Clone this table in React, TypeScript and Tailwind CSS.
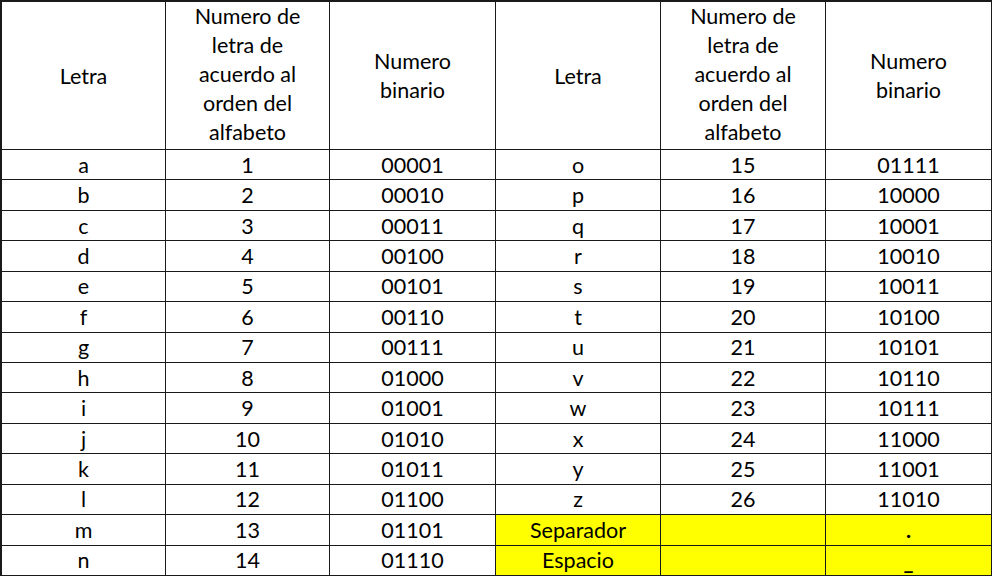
import React from "react";

const left: [string, string, string][] = [
  ["a", "1", "00001"],
  ["b", "2", "00010"],
  ["c", "3", "00011"],
  ["d", "4", "00100"],
  ["e", "5", "00101"],
  ["f", "6", "00110"],
  ["g", "7", "00111"],
  ["h", "8", "01000"],
  ["i", "9", "01001"],
  ["j", "10", "01010"],
  ["k", "11", "01011"],
  ["l", "12", "01100"],
  ["m", "13", "01101"],
  ["n", "14", "01110"],
];

const right: [string, string, string][] = [
  ["o", "15", "01111"],
  ["p", "16", "10000"],
  ["q", "17", "10001"],
  ["r", "18", "10010"],
  ["s", "19", "10011"],
  ["t", "20", "10100"],
  ["u", "21", "10101"],
  ["v", "22", "10110"],
  ["w", "23", "10111"],
  ["x", "24", "11000"],
  ["y", "25", "11001"],
  ["z", "26", "11010"],
  ["Separador", "", "."],
  ["Espacio", "", "_"],
];

const Cell = ({
  children,
  yellow,
  className = "",
}: {
  children?: React.ReactNode;
  yellow?: boolean;
  className?: string;
}) => (
  <div
    className={`flex items-center justify-center text-center min-h-0 overflow-hidden border-r border-b border-[#1a1a1a] ${
      yellow ? "bg-[#ffff00]" : "bg-white"
    } ${className}`}
  >
    {children}
  </div>
);

export default function App() {
  const headers = (
    <>
      <Cell>Letra</Cell>
      <Cell className="leading-[29px] pb-[3px]">
        Numero de
        <br />
        letra de
        <br />
        acuerdo al
        <br />
        orden del
        <br />
        alfabeto
      </Cell>
      <Cell className="leading-[29px]">
        Numero
        <br />
        binario
      </Cell>
    </>
  );

  return (
    <div
      className="w-[992px] h-[576px] bg-white text-black text-[21.5px] leading-[24px] overflow-hidden"
      style={{ fontFamily: "Lato, 'Open Sans', sans-serif" }}
    >
      <div className="grid grid-cols-[164px_164px_166px_165px_165px_166px] grid-rows-[148px_repeat(14,minmax(0,1fr))] h-[576px] border-t-2 border-l-2 border-[#1a1a1a]">
        {headers}
        {headers}
        {left.map((l, i) => {
          const r = right[i];
          const y = i >= 12;
          return (
            <React.Fragment key={l[0]}>
              <Cell>{l[0]}</Cell>
              <Cell>{l[1]}</Cell>
              <Cell>{l[2]}</Cell>
              <Cell yellow={y}>{r[0]}</Cell>
              <Cell yellow={y}>{r[1]}</Cell>
              {r[2] === "_" ? (
                <Cell yellow={y} className="items-end pb-[2px]">
                  <span className="leading-none font-bold">_</span>
                </Cell>
              ) : r[2] === "." ? (
                <Cell yellow={y}>
                  <span className="font-bold">.</span>
                </Cell>
              ) : (
                <Cell yellow={y}>{r[2]}</Cell>
              )}
            </React.Fragment>
          );
        })}
      </div>
    </div>
  );
}
